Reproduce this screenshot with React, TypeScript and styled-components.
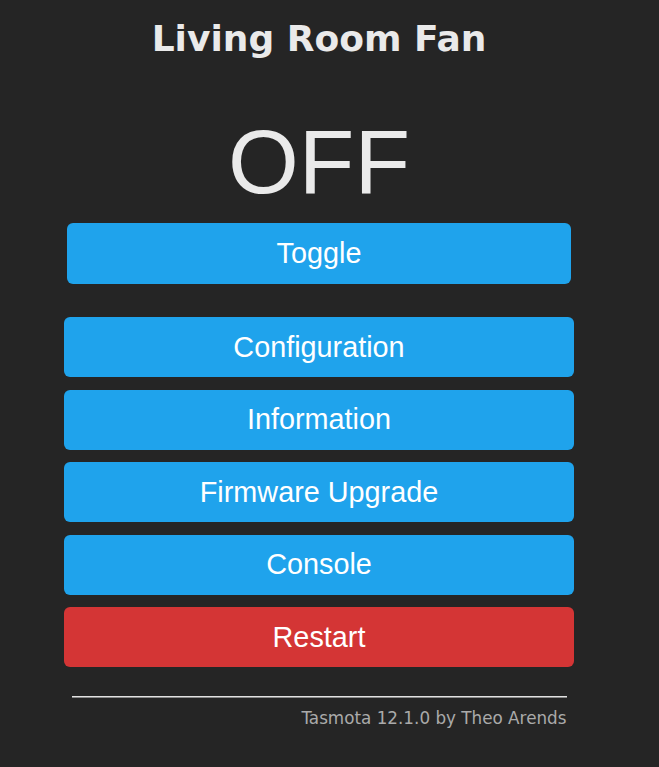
import React, {FC} from 'react';
import styled, {createGlobalStyle} from 'styled-components';

const GlobalStyle = createGlobalStyle`
  html, body {
    margin: 0;
    padding: 0;
    background: #252525;
  }
`

interface MenuItem {
    label: string;
    danger?: boolean;
}

const menu: MenuItem[] = [
    {label: 'Configuration'},
    {label: 'Information'},
    {label: 'Firmware Upgrade'},
    {label: 'Console'},
    {label: 'Restart', danger: true},
];

const App: FC = () => {
    return (
        <>
            <GlobalStyle/>
            <StyledPage>
                <StyledContainer>
                    <StyledTitle>Living Room Fan</StyledTitle>
                    <StyledState>OFF</StyledState>
                    <StyledToggleRow>
                        <StyledButton $tall>Toggle</StyledButton>
                    </StyledToggleRow>
                    <StyledMenu>
                        {menu.map(item => (
                            <StyledButton key={item.label} $danger={item.danger}>
                                {item.label}
                            </StyledButton>
                        ))}
                    </StyledMenu>
                    <StyledFooter>
                        <StyledRule/>
                        <StyledCredit>Tasmota 12.1.0 by Theo Arends</StyledCredit>
                    </StyledFooter>
                </StyledContainer>
            </StyledPage>
        </>
    );
};

const StyledPage = styled.div`
  width: 638px;
  display: flex;
  justify-content: center;
  padding-top: 18px;
`

const StyledContainer = styled.div`
  width: 510px;
  color: #eaeaea;
  display: flex;
  flex-direction: column;
`

const StyledTitle = styled.h2`
  margin: 0;
  text-align: center;
  font-family: "DejaVu Sans", Verdana, sans-serif;
  font-weight: bold;
  font-size: 36px;
  line-height: 42px;
  color: #eaeaea;
`

const StyledState = styled.div`
  margin-top: 47px;
  text-align: center;
  font-family: "Liberation Sans", Arial, sans-serif;
  font-size: 91px;
  line-height: 109px;
  color: #eaeaea;
`

const StyledToggleRow = styled.div`
  margin-top: 7px;
  padding: 0 3px;
  display: flex;
`

const StyledMenu = styled.div`
  margin-top: 33px;
  display: flex;
  flex-direction: column;
  gap: 12.5px;
`

const StyledButton = styled.button<{ $danger?: boolean; $tall?: boolean }>`
  width: 100%;
  height: ${p => (p.$tall ? '61px' : '60px')};
  border: 0;
  border-radius: 6px;
  padding: 0;
  background: ${p => (p.$danger ? '#d43535' : '#1fa3ec')};
  color: #fff;
  font-family: "Liberation Sans", Arial, sans-serif;
  font-size: 28.8px;
  cursor: pointer;
`

const StyledFooter = styled.div`
  margin-top: 28.5px;
  display: flex;
  flex-direction: column;
  align-items: center;
`

const StyledRule = styled.div`
  width: 495px;
  height: 1px;
  background: #e2e2e2;
  border-bottom: 1px solid #8a8a8a;
`

const StyledCredit = styled.div`
  width: 495px;
  margin-top: 10px;
  text-align: right;
  font-family: "DejaVu Sans", Verdana, sans-serif;
  font-size: 16.8px;
  color: #aaaaaa;
`

export default App;
